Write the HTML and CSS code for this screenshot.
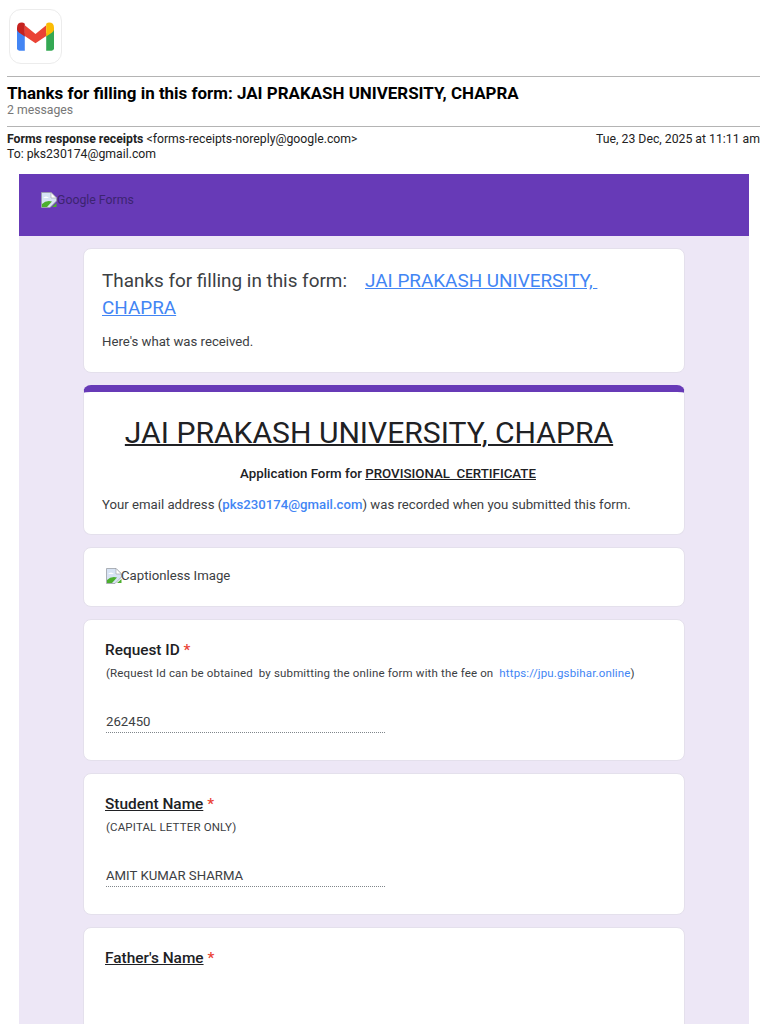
FILE: index.html
```html
<!DOCTYPE html>
<html lang="en">
<head>
<meta charset="utf-8">
<title>Gmail - Thanks for filling in this form</title>
<link rel="stylesheet" href="styles.css">
</head>
<body>
<div class="page">
  <div class="logo-tile">
    <svg class="logo" viewBox="0 0 38 30" width="37" height="30" aria-hidden="true">
      <path d="M0 5.5 V26.5 Q0 29 2.5 29 H8 V11.5 Z" fill="#4285f4"/>
      <path d="M38 5.5 V26.5 Q38 29 35.5 29 H30 V11.5 Z" fill="#34a853"/>
      <path d="M8 3 L19 12 L30 3 V14 L19 21.5 L8 14 Z" fill="#ea4335"/>
      <path d="M0 5.5 Q0 0 5 0 Q6.5 0 8 1.4 V14.5 L2 10.5 Q0 9 0 7 Z" fill="#c5221f"/>
      <path d="M38 5.5 Q38 0 33 0 Q31.5 0 30 1.4 V14.5 L36 10.5 Q38 9 38 7 Z" fill="#fbbc04"/>
    </svg>
  </div>
  <hr class="rule rule-top">
  <h1 class="subject">Thanks for filling in this form: JAI PRAKASH UNIVERSITY, CHAPRA</h1>
  <div class="count">2 messages</div>
  <hr class="rule rule-mid">
  <div class="meta">
    <div class="meta-from"><b>Forms response receipts</b> &lt;forms-receipts-noreply@google.com&gt;<br>To: pks230174@gmail.com</div>
    <div class="meta-date">Tue, 23 Dec, 2025 at 11:11 am</div>
  </div>

  <div class="mail">
    <div class="banner">
      <span class="alt alt-banner">
        <svg class="broken" viewBox="0 0 16 16" aria-hidden="true"><use href="#broken-img"/></svg><span>Google Forms</span>
      </span>
    </div>
    <div class="cards">
      <section class="card card-intro">
        <p class="intro-title"><span class="intro-lead">Thanks for filling in this form:</span><a class="link" href="#">JAI PRAKASH UNIVERSITY,&nbsp;<wbr>CHAPRA</a></p>
        <p class="intro-sub">Here's what was received.</p>
      </section>
      <section class="card card-head">
        <h2 class="form-title">JAI PRAKASH UNIVERSITY, CHAPRA</h2>
        <p class="form-desc">Application Form for <u>PROVISIONAL&nbsp; CERTIFICATE</u></p>
        <p class="form-mail">Your email address (<a class="mail-link" href="#">pks230174@gmail.com</a>) was recorded when you submitted this form.</p>
      </section>
      <section class="card card-image">
        <span class="alt">
          <svg class="broken broken-tight" viewBox="0 0 16 16" aria-hidden="true"><use href="#broken-img"/></svg><span>Captionless Image</span>
        </span>
      </section>
      <section class="card card-q">
        <h3 class="q-title">Request ID <span class="req">*</span></h3>
        <p class="q-help">(Request Id can be obtained&nbsp; by submitting the online form with the fee on &nbsp;<a class="help-link" href="#">https://jpu.gsbihar.online</a>)</p>
        <div class="answer">262450</div>
      </section>
      <section class="card card-q">
        <h3 class="q-title"><u>Student Name</u> <span class="req">*</span></h3>
        <p class="q-help">(CAPITAL LETTER ONLY)</p>
        <div class="answer">AMIT KUMAR SHARMA</div>
      </section>
      <section class="card card-q card-last">
        <h3 class="q-title"><u>Father's Name</u> <span class="req">*</span></h3>
      </section>
    </div>
  </div>
</div>
<svg class="defs" width="0" height="0" aria-hidden="true">
  <symbol id="broken-img" viewBox="0 0 16 16">
    <path d="M0.5 0.5 H10 L15.5 6 V9 L9 15.5 H0.5 Z" fill="#d7e3f4" stroke="#9aa0a6" stroke-width="0.8"/>
    <path d="M10 0.5 V6 H15.5 Z" fill="#fff" stroke="#9aa0a6" stroke-width="0.6"/>
    <path d="M1 15 V12 Q5 8 11 9.5 L6 15 Z" fill="#4caf2e"/>
    <path d="M11 15 L15.5 11 V15 Z" fill="#4caf2e"/>
    <path d="M2 6 Q5 3 8 6 Z" fill="#fff"/>
  </symbol>
</svg>
</body>
</html>
```
FILE: styles.css
```css
* { box-sizing: border-box; }
html, body { margin: 0; padding: 0; height: 1024px; overflow: hidden; background: #fff; }
body { font-family: Roboto, "Liberation Sans", sans-serif; color: #202124; }
.page { padding: 9px 8px 0 7px; height: 1024px; overflow: hidden; display: flex; flex-direction: column; }
.defs { position: absolute; }

.logo-tile { width: 53px; height: 55px; margin-left: 2px; border: 1px solid #ececec; border-radius: 12px; display: flex; align-items: center; justify-content: center; flex: none; }
.logo { display: block; margin-top: 1px; }

.rule { border: 0; height: 1px; margin: 0; background: #b4b4b4; flex: none; }
.rule-top { margin-top: 12px; }
.subject { margin: 6px 0 0; font-size: 16.95px; line-height: 20px; font-weight: 700; color: #000; }
.count { font-size: 12.25px; line-height: 15px; margin-top: 0; color: #777; }
.rule-mid { margin-top: 8px; }

.meta { display: flex; justify-content: space-between; font-size: 12.25px; line-height: 15px; margin-top: 5px; color: #222; }
.meta-from b { font-weight: 700; }

.mail { margin: 12px 11px 0 12px; background: #ede7f6; flex: 1; min-height: 0; }
.banner { height: 62px; background: #673ab7; padding: 18px 22px; }
.alt { display: inline-flex; align-items: center; font-size: 13.2px; line-height: 16px; }
.alt-banner { font-size: 12.3px; color: #3c2470; }
.broken { width: 16px; height: 16px; flex: none; }
.broken-tight { margin-right: -1px; }

.cards { display: flex; flex-direction: column; gap: 12px; padding: 12px 64px 0; }
.card { position: relative; background: #fff; border-radius: 8px; border: 1px solid #e4e0ec; }
.card-intro { height: 125px; padding: 18px 18px 0; }
.intro-title { margin: 0; font-size: 18.9px; line-height: 27px; color: #3c4043; }
.intro-lead { margin-right: 18px; }
.link { color: #4285f4; }
.intro-sub { margin: 11px 0 0; font-size: 13.2px; line-height: 20px; color: #3c4043; }

.card-head { height: 150px; text-align: center; border-top: 7px solid #673ab7; }
.form-title { margin: 22px 0 0 -30px; font-size: 30.1px; line-height: 38px; font-weight: 400; color: #202124; text-decoration: underline; text-decoration-thickness: 2px; }
.form-desc { margin: 12px 0 0; padding-left: 8px; font-size: 13.3px; line-height: 20px; font-weight: 500; }
.form-mail { margin: 11px 0 0; padding-left: 18px; text-align: left; font-size: 13.2px; line-height: 20px; color: #3c4043; }
.mail-link { color: #4285f4; font-weight: 500; text-decoration: none; }

.card-image { height: 60px; padding: 20px 22px 0; color: #3c4043; }
.card-q { height: 142px; padding: 21px 22px 0; }
.card-last { height: 200px; }
.q-title { margin: 0 0 0 -1px; font-size: 15.4px; line-height: 18px; font-weight: 500; color: #202124; }
.req { color: #ea4335; }
.q-help { margin: 6px 0 0; font-size: 11.5px; line-height: 16px; color: #3c4043; letter-spacing: 0.15px; }
.help-link { color: #4285f4; text-decoration: none; }
.answer { margin-top: 32px; width: 279px; height: 20px; font-size: 13.2px; line-height: 18px; color: #3c4043; border-bottom: 1px dotted #80868b; }
```
